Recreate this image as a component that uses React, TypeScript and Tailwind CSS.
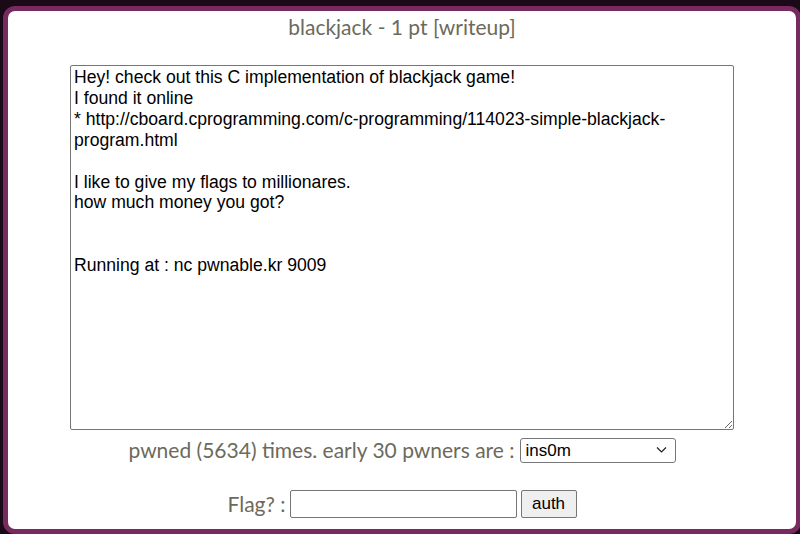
import { useState } from 'react';

const DESCRIPTION = `Hey! check out this C implementation of blackjack game!
I found it online
* http://cboard.cprogramming.com/c-programming/114023-simple-blackjack-program.html

I like to give my flags to millionares.
how much money you got?


Running at : nc pwnable.kr 9009`;

export default function App() {
  const [flag, setFlag] = useState('');

  return (
    <div className="h-[534px] w-[800px] overflow-hidden bg-[#1a0917] pt-[6px] pl-[3px]">
      <div className="flex h-[528px] w-[798px] flex-col items-center rounded-[12px] border-[5px] border-[#772a5f] bg-white font-['Lato',sans-serif] text-[#6c6a5c]">
        {/* title */}
        <h1 className="pt-[4px] text-[21px] leading-[24px]">blackjack - 1 pt [writeup]</h1>

        <textarea
          readOnly
          value={DESCRIPTION}
          className="mt-[26px] h-[365px] w-[664px] rounded-[2px] border border-[#767676] px-[3px] py-[1px] font-['Liberation_Sans',Arial,sans-serif] text-[17.6px] leading-[20.9px] text-black outline-none"
        />

        <div className="mt-[7px] flex items-center gap-[5px]">
          <span className="text-[21px] leading-[26px]">pwned (5634) times. early 30 pwners are :</span>
          <div className="relative">
            <select className="h-[25px] w-[156px] appearance-none rounded-[3px] border border-[#767676] bg-white pl-[5px] font-['Liberation_Sans',Arial,sans-serif] text-[17px] leading-[23px] text-black">
              <option>ins0m</option>
            </select>
            <svg
              className="pointer-events-none absolute top-[8px] right-[9px]"
              width="11"
              height="8"
              viewBox="0 0 11 8"
              fill="none"
            >
              <path d="M1 1.5L5.5 6L10 1.5" stroke="#222" strokeWidth="1.2" />
            </svg>
          </div>
        </div>

        <div className="mt-[27px] flex items-center gap-[4px]">
          <span className="text-[21px] leading-[28px]">Flag? :</span>
          <input
            value={flag}
            onChange={(e) => setFlag(e.target.value)}
            className="h-[28px] w-[227px] rounded-[2px] border border-[#767676] bg-white px-1 font-['Liberation_Sans',Arial,sans-serif] text-[16px] text-black outline-none"
          />
          <button className="h-[28px] w-[56px] rounded-[2px] border border-[#767676] bg-[#efefef] font-['Liberation_Sans',Arial,sans-serif] text-[17px] text-black">
            auth
          </button>
        </div>
      </div>
    </div>
  );
}
